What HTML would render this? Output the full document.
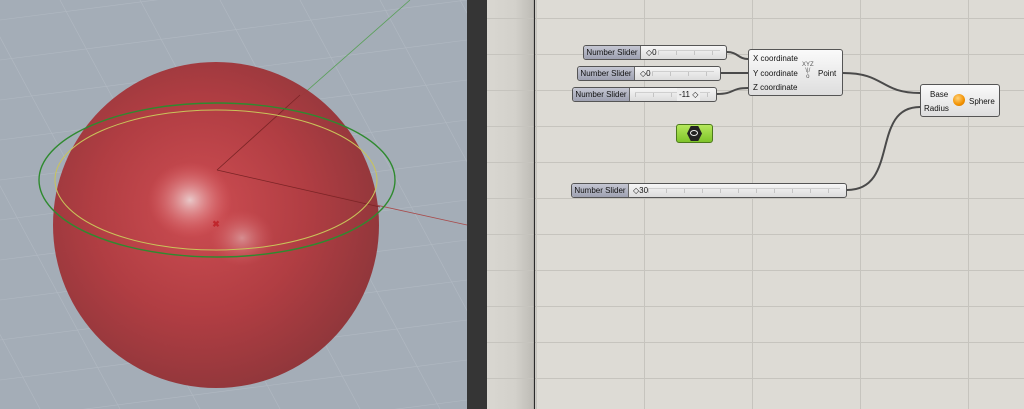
<!DOCTYPE html>
<html><head><meta charset="utf-8"><style>
html,body{margin:0;padding:0;width:1024px;height:409px;overflow:hidden;background:#dddbd5;font-family:"Liberation Sans",sans-serif}
.s{position:absolute;height:13px;border:1px solid #555;border-radius:3px;background:linear-gradient(#f6f6f6,#dcdcdc);font-size:8px;color:#111;overflow:hidden}
.s .l{position:absolute;left:0;top:0;bottom:0;background:linear-gradient(#c4c6d2,#9ea1b1);border-right:1px solid #666;line-height:13px;text-align:center;border-radius:2px 0 0 2px}
.s .v{position:absolute;top:0;line-height:13px}
.s .t{position:absolute;top:4px;height:4px;border-top:1px solid #cfcfcf;background:repeating-linear-gradient(90deg,#c4c4c4 0 1px,transparent 1px 18px)}
.c{position:absolute;border:1px solid #555;border-radius:3px;background:linear-gradient(#fafafa,#dedede);font-size:8px;color:#111;overflow:hidden}
.c div{position:absolute;white-space:nowrap}
</style></head><body>
<svg width="1024" height="409" style="position:absolute;left:0;top:0">
<defs>
<radialGradient id="sp" cx="0.45" cy="0.45" r="0.6">
<stop offset="0" stop-color="#cf4a4f"/><stop offset="0.55" stop-color="#b13a3f"/><stop offset="1" stop-color="#8c3236"/>
</radialGradient>
<radialGradient id="hl" cx="0.5" cy="0.5" r="0.5"><stop offset="0" stop-color="#ecd6d6" stop-opacity="0.9"/><stop offset="1" stop-color="#e36a6e" stop-opacity="0"/></radialGradient>
<pattern id="g" width="108" height="36" patternUnits="userSpaceOnUse" x="536" y="18">
<line x1="0" y1="0.5" x2="108" y2="0.5" stroke="#c6c4be" stroke-width="1"/>
<line x1="0.5" y1="0" x2="0.5" y2="36" stroke="#c6c4be" stroke-width="1"/>
</pattern>
<linearGradient id="st" x1="0" x2="1"><stop offset="0" stop-color="#d9d7d1"/><stop offset="0.6" stop-color="#d3d1cb"/><stop offset="1" stop-color="#bdbbb5"/></linearGradient>
</defs>
<rect x="0" y="0" width="467" height="409" fill="#a4adb7"/>
<g stroke="#b3bbc4" stroke-width="0.6" opacity="0.9">
<path d="M0 20 L467 -40 M0 60 L467 0 M0 100 L467 40 M0 140 L467 80 M0 180 L467 120 M0 220 L467 160 M0 260 L467 200 M0 300 L467 240 M0 340 L467 280 M0 380 L467 320 M0 420 L467 360 M0 460 L467 400 M0 500 L467 440"/>
<path d="M-100 0 L120 409 M-20 0 L200 409 M60 0 L280 409 M140 0 L360 409 M220 0 L440 409 M300 0 L520 409 M380 0 L600 409 M460 0 L680 409 M-180 0 L40 409"/>
</g>
<line x1="217" y1="170" x2="410" y2="0" stroke="#5aa05a" stroke-width="0.8"/>
<line x1="217" y1="170" x2="467" y2="225" stroke="#a84a4a" stroke-width="0.8"/>
<circle cx="216" cy="225" r="163" fill="url(#sp)" opacity="0.97"/>
<ellipse cx="190" cy="200" rx="42" ry="38" fill="url(#hl)"/>
<ellipse cx="242" cy="238" rx="32" ry="28" fill="url(#hl)" opacity="0.55"/>
<line x1="217" y1="170" x2="380" y2="207" stroke="#7a2426" stroke-width="0.8"/>
<line x1="217" y1="170" x2="300" y2="95" stroke="#7a2426" stroke-width="0.8"/>
<ellipse cx="216" cy="180" rx="161" ry="70" fill="none" stroke="#c9c45a" stroke-width="1"/>
<ellipse cx="217" cy="180" rx="178" ry="77" fill="none" stroke="#2f8a2f" stroke-width="1.4"/>
<text x="216" y="227" font-size="9" fill="#c0272d" text-anchor="middle" font-weight="bold">✖</text>
<rect x="467" y="0" width="20" height="409" fill="#353535"/>
<rect x="487" y="0" width="537" height="409" fill="#dddbd5"/>
<rect x="487" y="0" width="47" height="409" fill="url(#st)"/>
<rect x="487" y="0" width="537" height="409" fill="url(#g)"/>
<line x1="534.5" y1="0" x2="534.5" y2="409" stroke="#2a2a2a" stroke-width="1.2"/>
<g fill="none" stroke="#4a4a4a" stroke-width="2">
<path d="M727 52 C738 52,738 59,748 59"/>
<path d="M721 73 L748 73"/>
<path d="M717 94 C735 94,730 88,748 88"/>
<path d="M843 73 C885 73,880 93,920 93"/>
<path d="M847 190 C900 190,870 107,920 107"/>
</g>
</svg>
<div class="s" style="left:583px;top:45px;width:142px"><div class="l" style="width:56px">Number Slider</div><div class="v" style="left:62px">◇0</div><div class="t" style="left:74px;right:6px"></div></div>
<div class="s" style="left:577px;top:66px;width:142px"><div class="l" style="width:56px">Number Slider</div><div class="v" style="left:62px">◇0</div><div class="t" style="left:74px;right:6px"></div></div>
<div class="s" style="left:572px;top:87px;width:143px"><div class="l" style="width:56px">Number Slider</div><div class="t" style="left:62px;right:6px"></div><div class="v" style="left:104px;background:#eee;padding:0 2px">-11 ◇</div></div>
<div class="s" style="left:571px;top:183px;width:274px"><div class="l" style="width:56px">Number Slider</div><div class="v" style="left:61px">◇30</div><div class="t" style="left:76px;right:6px"></div></div>
<div class="c" style="left:748px;top:49px;width:93px;height:45px">
<div style="left:4px;top:4px">X coordinate</div><div style="left:4px;top:19px">Y coordinate</div><div style="left:4px;top:33px">Z coordinate</div>
<div style="left:53px;top:12px;font-size:6px;color:#555;line-height:6px;text-align:center">XYZ<br>\|/<br>o</div>
<div style="left:69px;top:19px">Point</div></div>
<div class="c" style="left:920px;top:84px;width:78px;height:31px">
<div style="left:9px;top:5px">Base</div><div style="left:3px;top:19px">Radius</div>
<div style="left:32px;top:9px;width:12px;height:12px;border-radius:50%;background:radial-gradient(circle at 40% 35%,#ffd27a,#f29100 60%,#c86b00)"></div>
<div style="left:48px;top:12px">Sphere</div></div>
<div style="position:absolute;left:676px;top:124px;width:35px;height:17px;border:1px solid #4c7a1c;border-radius:3px;background:linear-gradient(#b5e85c,#7fc42a)">
<div style="position:absolute;left:10px;top:1px;width:15px;height:15px;background:#222;clip-path:polygon(25% 0,75% 0,100% 50%,75% 100%,25% 100%,0 50%)"></div>
<div style="position:absolute;left:13px;top:5px;width:6px;height:4px;border:1.5px solid #eee;border-radius:50%"></div></div>
</body></html>
